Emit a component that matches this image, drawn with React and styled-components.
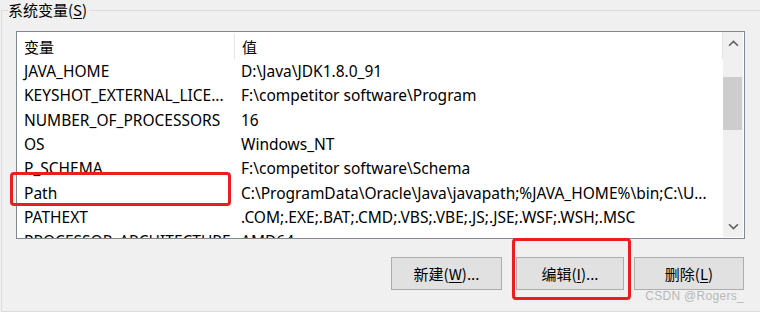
import React from "react";
import styled, { createGlobalStyle } from "styled-components";

const GlobalStyle = createGlobalStyle`
    html, body {
        margin: 0;
        padding: 0;
        background: #f0f0f0;
        overflow: hidden;
    }
    body {
        font-family: "Noto Sans", "Noto Sans CJK SC", sans-serif;
        font-size: 15.5px;
        color: #000;
    }
`;

const Page = styled.div`
    position: relative;
    width: 760px;
    height: 312px;
    background: #f0f0f0;
    overflow: hidden;
`;

const Group = styled.fieldset`
    box-sizing: border-box;
    margin: 0 0 0 1px;
    width: 780px;
    height: 312px;
    padding: 0 0 0 14px;
    border: 1px solid #dcdcdc;
`;

const Legend = styled.legend`
    margin-left: -8px;
    padding: 0 2px 0 0;
    font-family: "Noto Sans CJK SC", sans-serif;
    font-size: 15px;
    line-height: 20px;
    color: #000;
`;

const Key = styled.span`
    text-decoration: underline;
    text-underline-offset: 2px;
`;

const ListBox = styled.div`
    box-sizing: border-box;
    margin-top: 11px;
    width: 729px;
    height: 208px;
    border: 1px solid #828790;
    background: #fff;
    display: grid;
    grid-template-columns: 1fr 21px;
`;

const Table = styled.div`
    overflow: hidden;
    display: flex;
    flex-direction: column;
`;

const Header = styled.div`
    display: grid;
    grid-template-columns: 217px 1fr;
    height: 27px;
    flex-shrink: 0;
    align-items: center;
    border-right: 1px solid #e5e5e5;
    font-family: "Noto Sans CJK SC", sans-serif;
    font-size: 15px;
`;

const HeaderCell = styled.div`
    padding-left: 7px;
    height: 25px;
    line-height: 25px;
    margin-top: 2px;
    border-left: ${props => (props.$divider ? "1px solid #e5e5e5" : "none")};
`;

const Row = styled.div`
    display: grid;
    grid-template-columns: 217px 1fr;
    height: 24.33px;
    flex-shrink: 0;
    align-items: center;
`;

const Cell = styled.div`
    padding-left: 7px;
    white-space: nowrap;
    overflow: hidden;
    text-overflow: ellipsis;
    line-height: 24px;
`;

const ScrollBar = styled.div`
    background: #f0f0f0;
    display: flex;
    flex-direction: column;
    align-items: center;
    margin: 0 1px 1px 0;
`;

const Arrow = styled.div`
    height: 22px;
    width: 100%;
    display: flex;
    align-items: center;
    justify-content: center;
    flex-shrink: 0;
`;

const Track = styled.div`
    flex: 1;
    width: 100%;
    padding-top: 23px;
`;

const Thumb = styled.div`
    width: 19px;
    height: 53px;
    background: #cdcdcd;
`;

const Buttons = styled.div`
    display: flex;
    justify-content: flex-end;
    width: 728px;
    margin-top: 18px;
`;

const Button = styled.button`
    box-sizing: border-box;
    width: ${props => props.$w}px;
    margin-left: ${props => props.$gap || 0}px;
    height: 33px;
    background: #e1e1e1;
    border: 1px solid #adadad;
    font-family: "Noto Sans CJK SC", sans-serif;
    font-size: 15px;
    color: #000;
    padding: 0;
`;

const Mark = styled.div`
    position: absolute;
    left: ${props => props.$x}px;
    top: ${props => props.$y}px;
    width: ${props => props.$w}px;
    height: ${props => props.$h}px;
    box-sizing: border-box;
    border: 3px solid #ee1d1d;
    border-radius: 4px;
    pointer-events: none;
`;

const Watermark = styled.div`
    position: absolute;
    right: 16px;
    top: 289px;
    font-family: "Liberation Sans", sans-serif;
    font-size: 12px;
    color: #b8b8b8;
    letter-spacing: 0.3px;
`;

const Chevron = ({ down }) => (
    <svg width="11" height="7" viewBox="0 0 11 7">
        <path
            d={down ? "M1 1.2 L5.5 5.6 L10 1.2" : "M1 5.8 L5.5 1.4 L10 5.8"}
            fill="none"
            stroke="#606060"
            strokeWidth="1.6"
        />
    </svg>
);

const rows = [
    ["JAVA_HOME", "D:\\Java\\JDK1.8.0_91"],
    ["KEYSHOT_EXTERNAL_LICE...", "F:\\competitor software\\Program"],
    ["NUMBER_OF_PROCESSORS", "16"],
    ["OS", "Windows_NT"],
    ["P_SCHEMA", "F:\\competitor software\\Schema"],
    ["Path", "C:\\ProgramData\\Oracle\\Java\\javapath;%JAVA_HOME%\\bin;C:\\U..."],
    ["PATHEXT", ".COM;.EXE;.BAT;.CMD;.VBS;.VBE;.JS;.JSE;.WSF;.WSH;.MSC"],
    ["PROCESSOR_ARCHITECTURE", "AMD64"],
];

const App = () => {
    return (
        <Page>
            <GlobalStyle />
            <Group>
                <Legend>
                    系统变量(<Key>S</Key>)
                </Legend>
                <ListBox>
                    <Table>
                        <Header>
                            <HeaderCell>变量</HeaderCell>
                            <HeaderCell $divider>值</HeaderCell>
                        </Header>
                        {rows.map(([name, value]) => (
                            <Row key={name}>
                                <Cell>{name}</Cell>
                                <Cell>{value}</Cell>
                            </Row>
                        ))}
                    </Table>
                    <ScrollBar>
                        <Arrow>
                            <Chevron />
                        </Arrow>
                        <Track>
                            <Thumb />
                        </Track>
                        <Arrow>
                            <Chevron down />
                        </Arrow>
                    </ScrollBar>
                </ListBox>
                <Buttons>
                    <Button $w={111}>
                        新建(<Key>W</Key>)...
                    </Button>
                    <Button $w={108} $gap={14}>
                        编辑(<Key>I</Key>)...
                    </Button>
                    <Button $w={110} $gap={10}>
                        删除(<Key>L</Key>)
                    </Button>
                </Buttons>
            </Group>
            <Mark $x={10} $y={172} $w={221} $h={34} />
            <Mark $x={512} $y={238} $w={119} $h={62} />
            <Watermark>CSDN @Rogers_</Watermark>
        </Page>
    );
};

export default App;
